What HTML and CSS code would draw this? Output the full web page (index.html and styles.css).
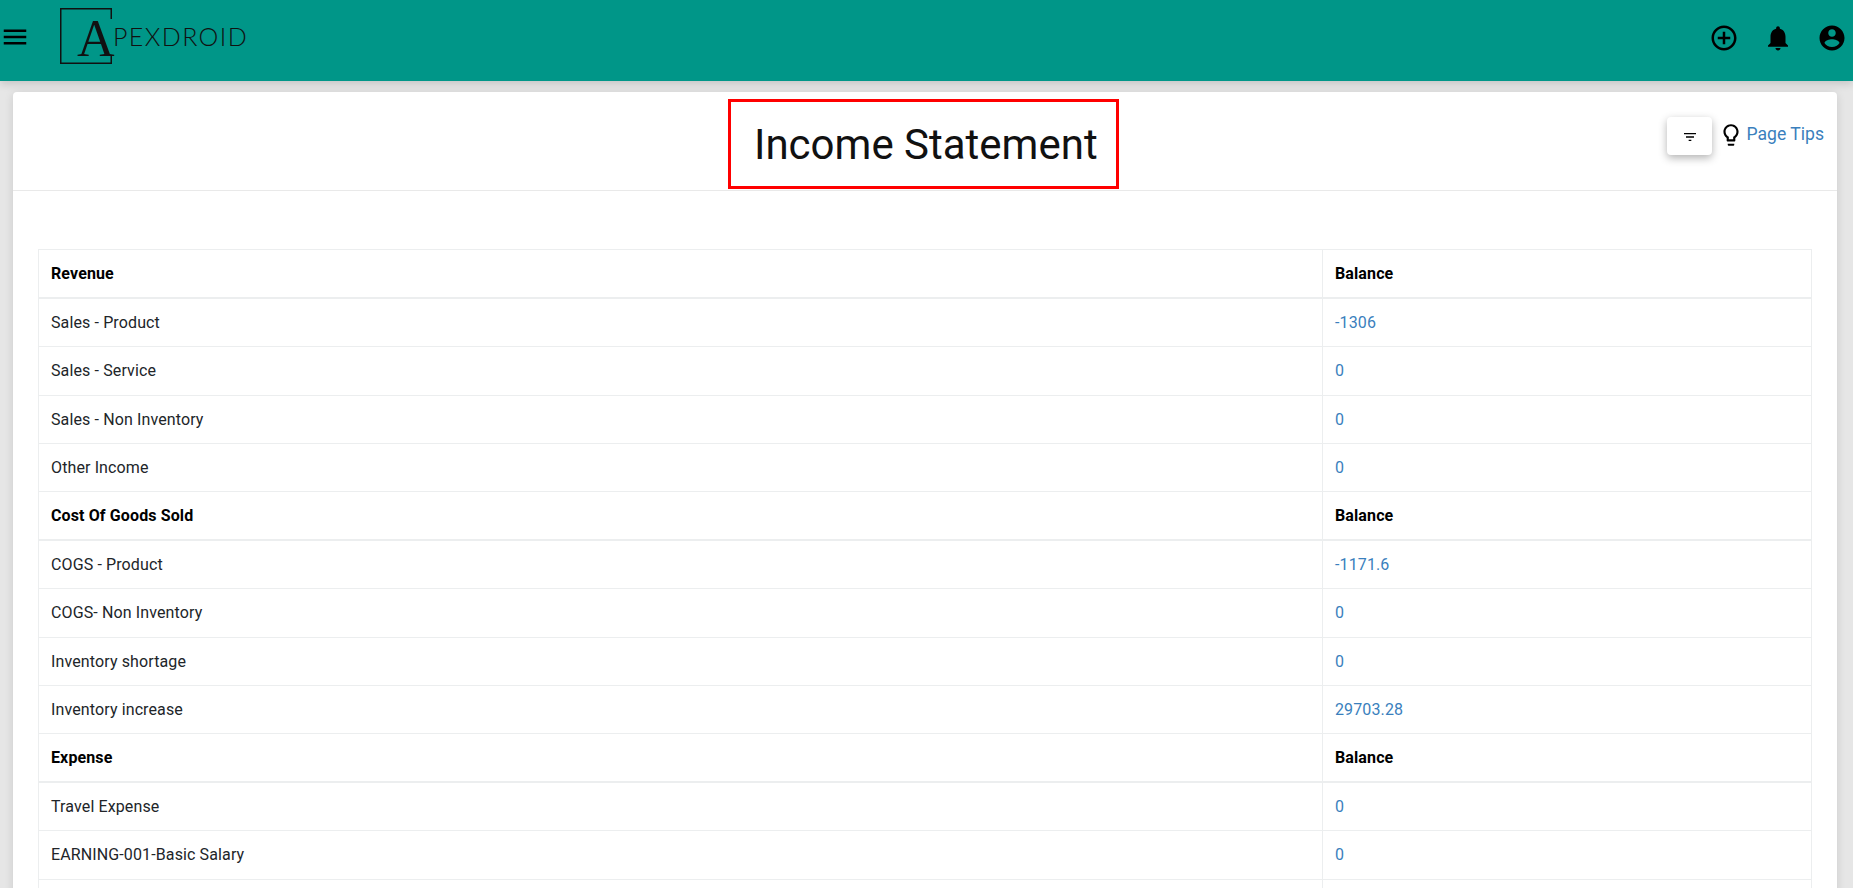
FILE: index.html
```html
<!DOCTYPE html>
<html lang="en">
<head>
<meta charset="utf-8">
<title>Income Statement</title>
<link rel="stylesheet" href="styles.css">
</head>
<body>
<header class="toolbar">
  <svg class="icon menu-icon" viewBox="0 0 24 24"><path d="M3 18h18v-2H3v2zm0-5h18v-2H3v2zm0-7v2h18V6H3z"/></svg>
  <div class="logo">
    <svg class="logo-frame" viewBox="0 0 52 56"><path d="M51.25 11V.75H.75v54.5h50.5V47" fill="none" stroke="#111" stroke-width="1.5"/></svg>
    <span class="logo-a">A</span>
    <span class="logo-word">PEXDROID</span>
  </div>
  <div class="toolbar-actions">
    <svg class="icon" viewBox="0 0 24 24"><path d="M13 7h-2v4H7v2h4v4h2v-4h4v-2h-4V7zm-1-5C6.48 2 2 6.48 2 12s4.48 10 10 10 10-4.48 10-10S17.52 2 12 2zm0 18c-4.41 0-8-3.59-8-8s3.59-8 8-8 8 3.59 8 8-3.59 8-8 8z"/></svg>
    <svg class="icon" viewBox="0 0 24 24"><path d="M12 22c1.1 0 2-.9 2-2h-4c0 1.1.89 2 2 2zm6-6v-5c0-3.07-1.64-5.64-4.5-6.32V4c0-.83-.67-1.5-1.5-1.5s-1.5.67-1.5 1.5v.68C7.63 5.36 6 7.92 6 11v5l-2 2v1h16v-1l-2-2z"/></svg>
    <svg class="icon" viewBox="0 0 24 24"><path d="M12 2C6.48 2 2 6.48 2 12s4.48 10 10 10 10-4.48 10-10S17.52 2 12 2zm0 3c1.66 0 3 1.34 3 3s-1.34 3-3 3-3-1.34-3-3 1.34-3 3-3zm0 14.2c-2.5 0-4.71-1.28-6-3.22.03-1.99 4-3.08 6-3.08 1.99 0 5.97 1.09 6 3.08-1.29 1.94-3.5 3.22-6 3.22z"/></svg>
  </div>
</header>
<main class="page">
  <section class="card">
    <div class="card-header">
      <div></div>
      <h1 class="title">Income Statement</h1>
      <div class="header-tools">
        <button class="filter-btn" type="button">
          <svg class="filter-icon" viewBox="0 0 24 24"><path d="M10 18h4v-2h-4v2zM3 6v2h18V6H3zm3 7h12v-2H6v2z"/></svg>
        </button>
        <svg class="bulb-icon" viewBox="0 0 24 24"><path d="M9 21c0 .55.45 1 1 1h4c.55 0 1-.45 1-1v-1H9v1zm3-19C8.14 2 5 5.14 5 9c0 2.38 1.19 4.47 3 5.74V17c0 .55.45 1 1 1h6c.55 0 1-.45 1-1v-2.26c1.81-1.27 3-3.36 3-5.74 0-3.86-3.14-7-7-7zm2.85 11.1l-.85.6V16h-4v-2.3l-.85-.6C7.8 12.16 7 10.63 7 9c0-2.76 2.24-5 5-5s5 2.24 5 5c0 1.63-.8 3.16-2.15 4.1z"/></svg>
        <a class="tips" href="#">Page Tips</a>
      </div>
    </div>
    <div class="card-body">
      <table class="report">
        <colgroup><col class="col-name"><col></colgroup>
        <tbody>
          <tr class="head"><th>Revenue</th><th>Balance</th></tr>
          <tr><td>Sales - Product</td><td><a href="#">-1306</a></td></tr>
          <tr><td>Sales - Service</td><td><a href="#">0</a></td></tr>
          <tr><td>Sales - Non Inventory</td><td><a href="#">0</a></td></tr>
          <tr><td>Other Income</td><td><a href="#">0</a></td></tr>
          <tr class="head"><th>Cost Of Goods Sold</th><th>Balance</th></tr>
          <tr><td>COGS - Product</td><td><a href="#">-1171.6</a></td></tr>
          <tr><td>COGS- Non Inventory</td><td><a href="#">0</a></td></tr>
          <tr><td>Inventory shortage</td><td><a href="#">0</a></td></tr>
          <tr><td>Inventory increase</td><td><a href="#">29703.28</a></td></tr>
          <tr class="head"><th>Expense</th><th>Balance</th></tr>
          <tr><td>Travel Expense</td><td><a href="#">0</a></td></tr>
          <tr><td>EARNING-001-Basic Salary</td><td><a href="#">0</a></td></tr>
          <tr><td>&nbsp;</td><td>&nbsp;</td></tr>
        </tbody>
      </table>
    </div>
  </section>
</main>
</body>
</html>
```

FILE: styles.css
```css
* { box-sizing: border-box; }
html, body { margin: 0; height: 100%; overflow: hidden; }
body { background: #e6e6e6; font-family: Roboto, "Liberation Sans", sans-serif; color: #212529; }

.toolbar {
  height: 81px;
  background: #009688;
  display: flex;
  align-items: center;
  padding: 0 6px 0 0;
  box-shadow: 0 3px 8px rgba(0,0,0,.14);
  position: relative;
}
.icon { width: 30px; height: 30px; display: block; fill: #000; }
.menu-icon { margin: -7px 30px 0 0; }
.logo { position: relative; width: 190px; height: 56px; margin-top: -9px; }
.logo-frame { position: absolute; left: 0; top: 0; width: 52px; height: 56px; }
.logo-a {
  position: absolute; left: 17px; top: 3px;
  font: 400 52px/56px "Liberation Serif", serif;
  color: #111;
}
.logo-word {
  position: absolute; left: 53px; top: 16px;
  font: 300 25px/24px Lato, sans-serif;
  letter-spacing: 1.4px;
  color: #111;
}
.toolbar-actions { margin-left: auto; display: flex; gap: 24px; margin-top: -6px; }

.page { padding: 11px 16px 0 13px; }
.card {
  background: #fff;
  border-radius: 4px;
  box-shadow: 0 2px 10px rgba(0,0,0,.12);
  height: 900px;
}
.card-header {
  display: grid;
  grid-template-columns: 715px 391px 1fr;
  height: 99px;
  padding-top: 7px;
  border-bottom: 1px solid #e9e9e9;
}
.title {
  margin: 0;
  height: 90px;
  border: 3px solid #f00;
  padding: 0 0 0 23px;
  font-size: 42px;
  font-weight: 400;
  line-height: 86px;
  color: #111;
  white-space: nowrap;
}
.header-tools {
  display: flex;
  align-items: center;
  justify-content: flex-end;
  height: 38px;
  margin-top: 18px;
  padding-right: 13px;
}
.filter-btn {
  width: 45px; height: 38px;
  background: #fff;
  border: 0; border-radius: 4px;
  box-shadow: 0 3px 8px rgba(0,0,0,.3);
  display: flex; align-items: center; justify-content: center;
  padding: 2px 0 0;
  margin-right: 6px;
}
.filter-icon { width: 16px; height: 16px; display: block; fill: #000; }
.bulb-icon { width: 26px; height: 26px; display: block; fill: #000; margin: -3px 2px 0 0; }
.tips { font-size: 17.6px; color: #3a7fbd; text-decoration: none; margin-top: -4px; }

.card-body { padding: 58px 25px 0; }
.report {
  width: 100%;
  table-layout: fixed;
  border-collapse: collapse;
  border: 1px solid #eceeef;
  font-size: 16px;
  letter-spacing: .12px;
  line-height: 23.2px;
}
.col-name { width: 1284px; }
.report th, .report td {
  padding: 12px;
  text-align: left;
  border: 1px solid #eceeef;
}
.report th { color: #000; font-weight: 700; }
.report .head th { border-bottom-width: 2px; }
.report td { color: #212529; }
.report a { color: #3a7fbd; text-decoration: none; }
```
